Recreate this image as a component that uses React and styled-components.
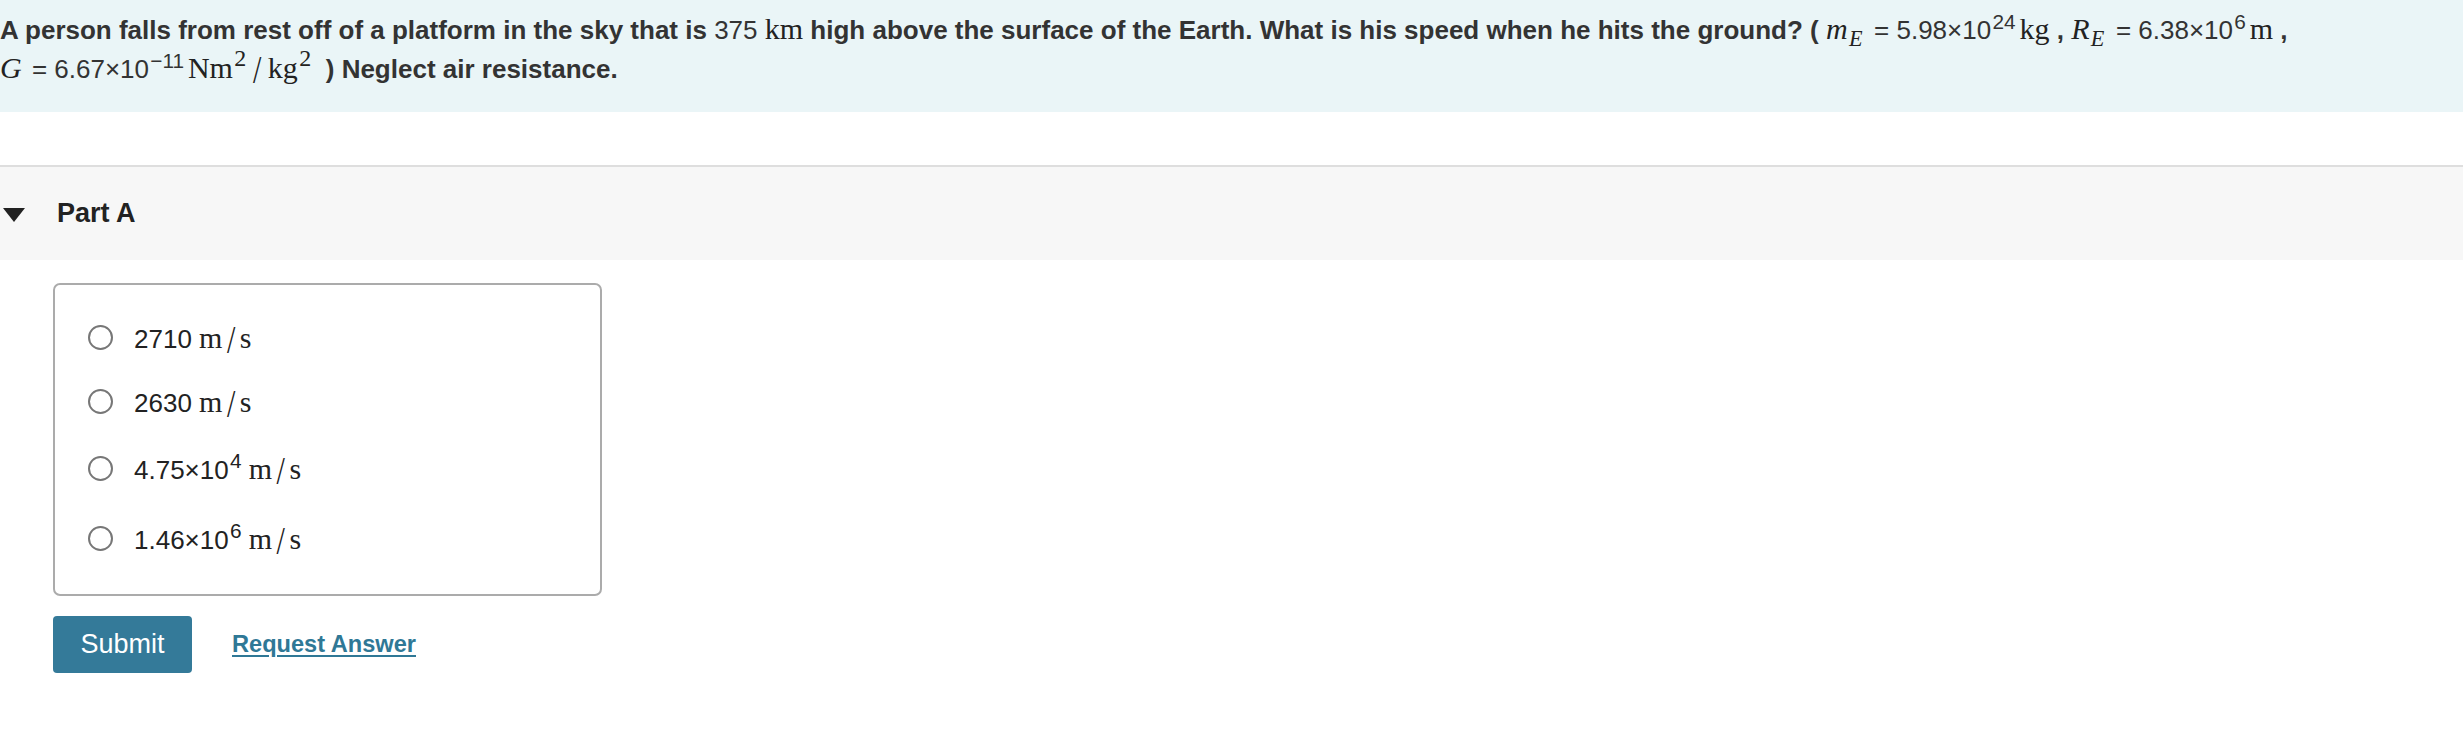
import React from "react";
import styled, { createGlobalStyle } from "styled-components";

const Global = createGlobalStyle`
  html, body { margin: 0; padding: 0; background: #fff; }
  body { font-family: "Liberation Sans", Arial, Helvetica, sans-serif; color: #333; }
`;

const Page = styled.div`
  display: flex;
  flex-direction: column;
  width: 2463px;
`;

const Question = styled.div`
  background: #eaf5f7;
  padding: 10px 0 24px 0;
  font-size: 26px;
  line-height: 37px;
  font-weight: 700;
  color: #333;
  white-space: nowrap;
`;

const Reg = styled.span`
  font-weight: 400;
  font-size: 26px;
  margin-left: ${(p) => (p.$pad ? "3px" : "0")};
`;

const M = styled.span`
  font-family: "Liberation Serif", "Times New Roman", serif;
  font-weight: 400;
  font-size: 30px;
  font-style: ${(p) => (p.$it ? "italic" : "normal")};
  margin-left: ${(p) => (p.$tight ? "0.13em" : "0")};
  color: #222;
`;

const Slash = styled.span`
  display: inline-block;
  margin: 0 ${(p) => (p.$wide ? "0.22em" : "0.15em")};
  transform: scaleY(1.3) translateY(0.05em);
`;

const Sup = styled.sup`
  font-size: 0.8em;
  line-height: 0;
  vertical-align: 0.5em;
  margin-left: 0.06em;
`;

const Sub = styled.sub`
  font-size: 0.74em;
  line-height: 0;
  vertical-align: -0.3em;
  font-style: italic;
  padding-left: 0.06em;
  padding-right: 0.06em;
`;

const Gap = styled.div`
  height: 53px;
`;

const PartHeader = styled.div`
  display: flex;
  align-items: center;
  gap: 32px;
  height: 93px;
  border-top: 2px solid #dedede;
  background: #f7f7f7;
  padding-left: 3px;
`;

const Caret = styled.svg`
  width: 22px;
  height: 14px;
  margin-top: 2px;
`;

const PartTitle = styled.h2`
  margin: 0;
  font-size: 27px;
  font-weight: 700;
  color: #222;
`;

const PartBody = styled.div`
  display: flex;
  flex-direction: column;
  align-items: flex-start;
  padding: 23px 0 0 53px;
`;

const OptionsBox = styled.div`
  box-sizing: border-box;
  width: 549px;
  height: 313px;
  border: 2px solid #ababab;
  border-radius: 7px;
  display: flex;
  flex-direction: column;
  justify-content: center;
  gap: 20px;
  padding: 20px 0 20px 33px;
`;

const OptionRow = styled.label`
  display: flex;
  align-items: center;
  gap: 21px;
  height: ${(p) => (p.$tall ? "50px" : "44px")};
  font-size: 26px;
  color: #222;
`;

const Radio = styled.span`
  box-sizing: border-box;
  width: 25px;
  height: 25px;
  border-radius: 50%;
  border: 2px solid #777;
  background: #fff;
  flex: none;
`;

const Actions = styled.div`
  display: flex;
  align-items: center;
  gap: 40px;
  margin-top: 20px;
`;

const SubmitButton = styled.button`
  width: 139px;
  height: 57px;
  border: none;
  border-radius: 4px;
  background: #347a99;
  color: #fff;
  font-family: "Liberation Sans", Arial, sans-serif;
  font-size: 27px;
  cursor: pointer;
`;

const LinkButton = styled.a`
  font-size: 23.6px;
  font-weight: 700;
  color: #2f7896;
  text-decoration: underline;
  text-underline-offset: 3px;
  cursor: pointer;
`;

const options = [
  { id: "a", num: <>2710</> },
  { id: "b", num: <>2630</> },
  { id: "c", num: <>4.75×10<Sup>4</Sup></>, tall: true },
  { id: "d", num: <>1.46×10<Sup>6</Sup></>, tall: true },
];

export default function App() {
  return (
    <Page>
      <Global />
      <Question>
        A person falls from rest off of a platform in the sky that is <Reg>375</Reg> <M>km</M> high above the
        surface of the Earth. What is his speed when he hits the ground? ({" "}
        <M $it>
          m<Sub>E</Sub>
        </M>{" "}
        <Reg $pad>
          = 5.98×10<Sup>24</Sup>
        </Reg>
        <M $tight>kg</M> ,{" "}
        <M $it>
          R<Sub>E</Sub>
        </M>{" "}
        <Reg $pad>
          = 6.38×10<Sup>6</Sup>
        </Reg>
        <M $tight>m</M> ,
        <br />
        <M $it>G</M>{" "}
        <Reg $pad>
          = 6.67×10<Sup>−11</Sup>
        </Reg>
        <M $tight>
          Nm<Sup>2</Sup>
          <Slash $wide>/</Slash>kg<Sup>2</Sup>
        </M>{" "}
        &nbsp;) Neglect air resistance.
      </Question>
      <Gap />
      <PartHeader>
        <Caret viewBox="0 0 22 14">
          <path d="M0 0 L22 0 L11 14 Z" fill="#222" />
        </Caret>
        <PartTitle>Part A</PartTitle>
      </PartHeader>
      <PartBody>
        <OptionsBox>
          {options.map((o) => (
            <OptionRow key={o.id} $tall={o.tall}>
              <Radio />
              <span>
                {o.num}{" "}
                <M>
                  m<Slash>/</Slash>s
                </M>
              </span>
            </OptionRow>
          ))}
        </OptionsBox>
        <Actions>
          <SubmitButton>Submit</SubmitButton>
          <LinkButton>Request Answer</LinkButton>
        </Actions>
      </PartBody>
    </Page>
  );
}
